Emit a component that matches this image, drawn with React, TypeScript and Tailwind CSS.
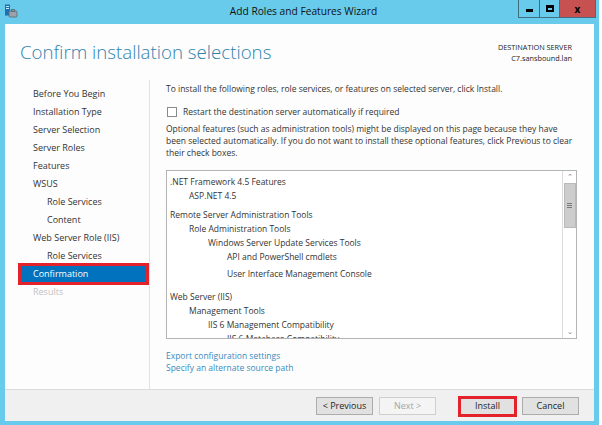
import React from "react";

const navItems = [
	{ label: "Before You Begin", indent: false },
	{ label: "Installation Type", indent: false },
	{ label: "Server Selection", indent: false },
	{ label: "Server Roles", indent: false },
	{ label: "Features", indent: false },
	{ label: "WSUS", indent: false },
	{ label: "Role Services", indent: true },
	{ label: "Content", indent: true },
	{ label: "Web Server Role (IIS)", indent: false },
	{ label: "Role Services", indent: true },
];

// level = indent depth, gap = extra space above the row
const listItems = [
	{ label: ".NET Framework 4.5 Features", level: 0, gap: "mt-[3px]" },
	{ label: "ASP.NET 4.5", level: 1, gap: "" },
	{ label: "Remote Server Administration Tools", level: 0, gap: "mt-[5px]" },
	{ label: "Role Administration Tools", level: 1, gap: "" },
	{ label: "Windows Server Update Services Tools", level: 2, gap: "" },
	{ label: "API and PowerShell cmdlets", level: 3, gap: "" },
	{ label: "User Interface Management Console", level: 3, gap: "mt-[3px]" },
	{ label: "Web Server (IIS)", level: 0, gap: "mt-[9px]" },
	{ label: "Management Tools", level: 1, gap: "" },
	{ label: "IIS 6 Management Compatibility", level: 2, gap: "" },
	{ label: "IIS 6 Metabase Compatibility", level: 3, gap: "" },
];

const indentClass = ["pl-[3px]", "pl-[22px]", "pl-[41px]", "pl-[60px]"];

const TitleIcon = () => (
	<svg width="14" height="14" viewBox="0 0 14 14">
		<rect x="1" y="0.5" width="5" height="11" fill="#1f6fb5" />
		<rect x="2" y="2" width="3" height="1" fill="#cfe6f7" />
		<rect x="2" y="4" width="3" height="1" fill="#cfe6f7" />
		<rect x="5" y="7" width="8" height="6" rx="1" fill="#9aa3ab" stroke="#5d666e" strokeWidth="0.8" />
		<rect x="7.5" y="5.5" width="3" height="2" fill="none" stroke="#5d666e" strokeWidth="0.8" />
	</svg>
);

const WizardButton: React.FC<{ label: string; disabled?: boolean }> = ({ label, disabled }) => (
	<div
		className={`w-[57px] h-[18px] flex items-center justify-center text-[9px] border ${
			disabled
				? "bg-[#f4f4f4] border-[#cfcfcf] text-[#a6a6a6]"
				: "bg-[#e1e1e1] border-[#acacac] text-[#1e1e1e]"
		}`}
	>
		{label}
	</div>
);

export default function App() {
	return (
		<div className="w-[602px] h-[425px] bg-white overflow-hidden font-['Open_Sans',sans-serif]">
			<div className="w-[599px] h-[425px] bg-[#68cbeb] flex flex-col">
				{/* title bar */}
				<div className="h-[24px] relative flex items-center justify-center shrink-0">
					<div className="absolute left-[4px] top-[4px]">
						<TitleIcon />
					</div>
					<span className="text-[10.2px] text-[#111] leading-none -mt-[1px] ml-[8px]">
						Add Roles and Features Wizard
					</span>
					<div className="absolute right-[3px] top-0 flex h-[18px] border border-t-0 border-[#3f6f80]">
						<div className="w-[21px] flex items-center justify-center border-r border-[#3f6f80]">
							<div className="w-[7px] h-[3px] bg-black mt-[3px]" />
						</div>
						<div className="w-[20px] flex items-center justify-center border-r border-[#3f6f80]">
							<div className="w-[8px] h-[7px] border-[2px] border-black border-t-[3px]" />
						</div>
						<div className="w-[35px] flex items-center justify-center bg-[#c75050] text-[10px] font-bold text-black leading-none">
							x
						</div>
					</div>
				</div>

				{/* window body */}
				<div className="flex-1 mx-[5px] mb-[4px] bg-[#fdfdfd] flex flex-col">
					<div className="h-[56px] flex justify-between shrink-0">
						<div className="pl-[15px] pt-[16px] text-[18.7px] leading-[24px] font-light text-[#2e83ae]">
							Confirm installation selections
						</div>
						<div className="pr-[22px] pt-[18px] text-right text-[7.3px] leading-[11px] text-[#222]">
							<div>DESTINATION SERVER</div>
							<div>C7.sansbound.lan</div>
						</div>
					</div>

					<div className="flex-1 flex min-h-0">
						{/* steps */}
						<div className="w-[145px] shrink-0 border-r border-[#e2e2e2] pt-[5px] text-[9px] text-[#333]">
							{navItems.map((item, i) => (
								<div
									key={i}
									className={`h-[18px] leading-[18px] ${item.indent ? "pl-[42px]" : "pl-[28px]"}`}
								>
									{item.label}
								</div>
							))}
							<div className="relative h-[18px] ml-[16px] mr-[3px]">
								<div className="h-full bg-[#0072be] text-white leading-[18px] pl-[12px]">
									Confirmation
								</div>
								<div className="absolute -left-[3px] -right-[3px] -top-[2px] -bottom-[2px] border-[3px] border-[#e3222b]" />
							</div>
							<div className="h-[18px] leading-[18px] pl-[28px] text-[#c2c2c2]">Results</div>
						</div>

						{/* main */}
						<div className="flex-1 min-w-0 pl-[16px] pr-[17px] text-[8.5px] text-[#333] whitespace-nowrap">
							<div className="mt-[3px] h-[12px] leading-[12px]">
								To install the following roles, role services, or features on selected server, click Install.
							</div>
							<div className="mt-[11px] h-[12px] flex items-center">
								<div className="w-[10px] h-[10px] ml-[1px] border border-[#8a8a8a] bg-white" />
								<span className="ml-[6px] leading-[12px]">
									Restart the destination server automatically if required
								</span>
							</div>
							<div className="mt-[5px] leading-[12px]">
								Optional features (such as administration tools) might be displayed on this page because they have
								<br />
								been selected automatically. If you do not want to install these optional features, click Previous to clear
								<br />
								their check boxes.
							</div>

							<div className="mt-[11px] h-[169px] border border-[#b4b4b4] bg-white flex overflow-hidden">
								<div className="flex-1 overflow-hidden pt-[1px]">
									{listItems.map((item, i) => (
										<div
											key={i}
											className={`h-[14px] leading-[14px] ${indentClass[item.level]} ${item.gap}`}
										>
											{item.label}
										</div>
									))}
								</div>
								<div className="w-[14px] border-l border-[#dcdcdc] flex flex-col items-center bg-white">
									<div className="h-[12px] text-[7px] leading-[12px] text-[#777]">&#8963;</div>
									<div className="w-[12px] h-[45px] bg-[#cdcdcd] border border-[#b9b9b9] flex flex-col items-center justify-center gap-[1px]">
										<div className="w-[5px] h-px bg-[#7a7a7a]" />
										<div className="w-[5px] h-px bg-[#7a7a7a]" />
										<div className="w-[5px] h-px bg-[#7a7a7a]" />
									</div>
									<div className="flex-1" />
									<div className="h-[10px] text-[7px] leading-[8px] text-[#777]">&#8964;</div>
								</div>
							</div>

							<div className="mt-[11px] leading-[12px] text-[#3a8cbf]">
								<div>Export configuration settings</div>
								<div>Specify an alternate source path</div>
							</div>
						</div>
					</div>

					{/* footer */}
					<div className="h-[32px] shrink-0 bg-[#f0f0f0] border-t border-[#dcdcdc] flex items-center justify-end pr-[15px] pt-[1px]">
						<WizardButton label="< Previous" />
						<div className="ml-[6px]">
							<WizardButton label="Next >" disabled />
						</div>
						<div className="ml-[23px] relative">
							<WizardButton label="Install" />
							<div className="absolute -left-[1px] -right-[1px] -top-[1px] -bottom-[2px] border-[3px] border-[#e3222b]" />
						</div>
						<div className="ml-[6px]">
							<WizardButton label="Cancel" />
						</div>
					</div>
				</div>
			</div>
		</div>
	);
}
